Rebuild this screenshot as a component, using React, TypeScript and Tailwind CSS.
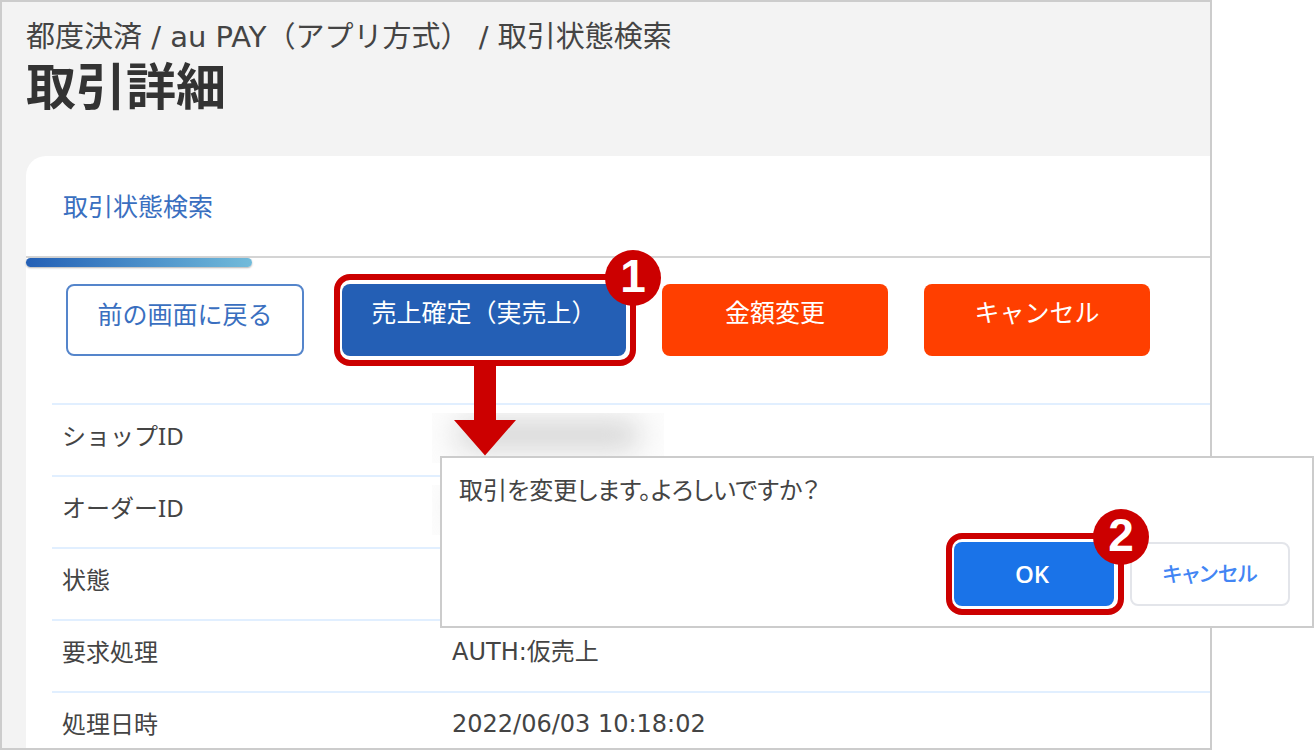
import type { ReactNode } from 'react';
import clsx from 'clsx';

const details: { label: string; value?: string; masked?: boolean }[] = [
  { label: 'ショップID', masked: true },
  { label: 'オーダーID', masked: true },
  { label: '状態' },
  { label: '要求処理', value: 'AUTH:仮売上' },
  { label: '処理日時', value: '2022/06/03 10:18:02' },
];

function ActionButton({
  children,
  className,
}: {
  children: ReactNode;
  className: string;
}) {
  return (
    <button
      type="button"
      className={clsx(
        'h-[72px] shrink-0 rounded-lg text-[25px] leading-9',
        className,
      )}
    >
      {children}
    </button>
  );
}

// red frame with a numbered badge around a button
function Step({
  number,
  children,
  arrow,
  className,
}: {
  number: number;
  children: ReactNode;
  arrow?: boolean;
  className: string;
}) {
  return (
    <div className="relative z-10 shrink-0">
      {children}
      <div
        className={clsx(
          'pointer-events-none absolute rounded-2xl border-6 border-[#cc0000]',
          className,
        )}
      >
        <span className="absolute -top-[30px] -right-[31px] flex h-14 w-14 items-center justify-center rounded-full bg-[#cc0000] pb-1 font-['Liberation_Sans',sans-serif] text-[46px] leading-none font-bold text-white">
          {number}
        </span>
        {arrow && (
          <svg
            viewBox="0 0 64 96"
            className="absolute top-full left-1/2 h-24 w-16 -translate-x-1/2"
            fill="#cc0000"
            aria-hidden="true"
          >
            <path d="M21 0h22v60h20L32 95.5 1 60h20z" />
          </svg>
        )}
      </div>
    </div>
  );
}

function MaskedValue() {
  return (
    <div className="-ml-5 h-[50px] w-[232px] overflow-hidden bg-[#fcfcfc] px-6 py-2">
      <div className="h-7 w-full rounded-full bg-[#d4d4d4] blur-[14px]" />
    </div>
  );
}

function ConfirmDialog() {
  return (
    <div
      role="dialog"
      aria-label="確認"
      className="absolute top-[456px] right-0 left-[440px] z-20 flex h-[172px] flex-col justify-between border-2 border-[#cccccc] bg-white pt-3 pr-[22px] pb-5 pl-[17px] font-['Open_Sans','Noto_Sans_CJK_JP',sans-serif]"
    >
      <p className="text-2xl leading-10 text-[#444444] [font-feature-settings:'palt']">
        取引を変更します。よろしいですか？
      </p>
      <div className="flex justify-end gap-4">
        <Step number={2} className="-inset-y-[9px] -right-[10px] -left-2">
          <button
            type="button"
            className="h-16 w-40 rounded-lg bg-[#1a73e8] pr-1 text-2xl font-semibold text-white"
          >
            OK
          </button>
        </Step>
        <button
          type="button"
          className="h-16 w-40 rounded-lg border-2 border-[#e3e5ea] text-[21px] font-medium text-[#4285f4] [font-feature-settings:'palt']"
        >
          キャンセル
        </button>
      </div>
    </div>
  );
}

export default function App() {
  return (
    <div className="relative h-screen overflow-hidden bg-white font-['DejaVu_Sans','Noto_Sans_CJK_JP',sans-serif] text-[#444444]">
      <main className="mr-[102px] h-full overflow-hidden border-2 border-[#cccccc] bg-[#f3f3f3] pt-[17px] pl-6">
        <nav
          aria-label="パンくず"
          className="text-[29px] leading-9 whitespace-pre"
        >
          都度決済 / au PAY（アプリ方式） / 取引状態検索
        </nav>
        <h1 className="text-[50px] leading-[66px] font-bold text-[#333333]">
          取引詳細
        </h1>

        <section className="mt-[35px] rounded-tl-[20px] bg-white">
          <div className="h-[102px] border-b-2 border-[#d4d4d4] pt-[34px] pl-[37px]">
            <a href="#search" className="text-[25px] leading-9 text-[#3a6fc0]">
              取引状態検索
            </a>
          </div>
          <div className="h-[9px] w-[226px] rounded-full bg-linear-to-r from-[#235fb5] to-[#72bbda] shadow-[0_1px_2px_rgba(0,0,0,0.3)]" />

          <div className="flex gap-9 pt-[17px] pl-10">
            <ActionButton className="mr-[2px] w-[238px] border-2 border-[#5585cb] pb-2 text-[#3a6fc0]">
              前の画面に戻る
            </ActionButton>
            <Step
              number={1}
              arrow
              className="-inset-y-[10px] -right-[10px] -left-2"
            >
              <ActionButton className="w-[284px] bg-[#245fb5] pb-3 text-white">
                売上確定（実売上）
              </ActionButton>
            </Step>
            <ActionButton className="w-[226px] bg-[#ff3f00] pb-3 text-white">
              金額変更
            </ActionButton>
            <ActionButton className="w-[226px] bg-[#ff3f00] pb-3 text-white">
              キャンセル
            </ActionButton>
          </div>

          <div className="pt-[47px] pl-[26px]">
            <table className="w-full border-separate border-spacing-0 text-2xl">
              <tbody>
                {details.map((row) => (
                  <tr key={row.label} className="h-[72px]">
                    <th
                      scope="row"
                      className="w-[390px] border-t-2 border-[#e1efff] pb-2 pl-[10px] text-left font-['Noto_Sans','Noto_Sans_CJK_JP',sans-serif] font-normal"
                    >
                      {row.label}
                    </th>
                    <td
                      className={clsx(
                        'border-t-2 border-[#e1efff] pl-[10px]',
                        row.masked ? 'pb-1' : 'pb-2',
                      )}
                    >
                      {row.masked ? <MaskedValue /> : row.value}
                    </td>
                  </tr>
                ))}
              </tbody>
            </table>
          </div>
        </section>
      </main>
      <ConfirmDialog />
    </div>
  );
}
